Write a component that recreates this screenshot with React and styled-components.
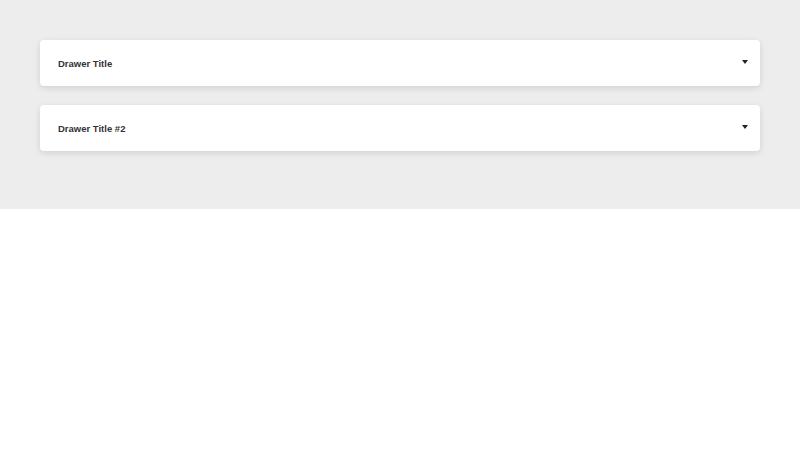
import React from "react";
import styled, { createGlobalStyle } from "styled-components";

const GlobalStyle = createGlobalStyle`
    body {
        margin: 0;
        background: #ffffff;
        font-family: "Liberation Sans", Arial, sans-serif;
    }
`;

const Section = styled.div`
    background: #ededed;
    padding: 40px 40px 58px;
    display: flex;
    flex-direction: column;
    gap: 19px;
`;

const Drawer = styled.div`
    background: #ffffff;
    border-radius: 4px;
    box-shadow: 0 2px 6px rgba(0, 0, 0, 0.12);
    height: 46px;
    padding: 0 12px 0 18px;
    display: flex;
    align-items: center;
    justify-content: space-between;
    cursor: pointer;
`;

const Title = styled.span`
    font-size: 9.5px;
    font-weight: 700;
    color: #333333;
    margin-top: 1px;
`;

const Caret = styled.span`
    width: 0;
    height: 0;
    border-left: 3.5px solid transparent;
    border-right: 3.5px solid transparent;
    border-top: 4px solid #222222;
    margin-top: -2px;
`;

const drawers = ["Drawer Title", "Drawer Title #2"];

const App = () => (
    <>
        <GlobalStyle />
        <Section>
            {drawers.map(title => (
                <Drawer key={title}>
                    <Title>{title}</Title>
                    <Caret />
                </Drawer>
            ))}
        </Section>
    </>
);

export default App;
